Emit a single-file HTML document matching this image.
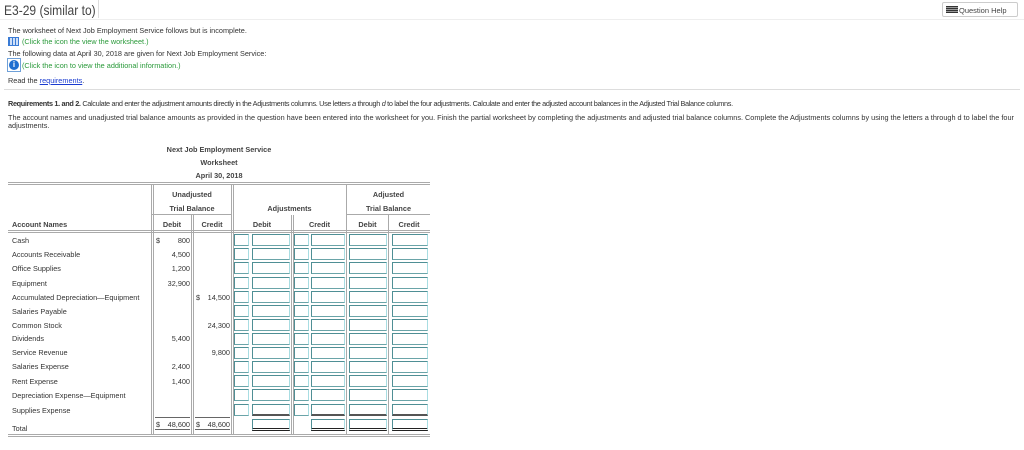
<!DOCTYPE html>
<html><head><meta charset="utf-8"><style>
*{margin:0;padding:0;box-sizing:border-box}
body{width:1024px;height:450px;background:#fff;font-family:"Liberation Sans",Arial,sans-serif;color:#333;position:relative;overflow:hidden;font-size:7.3px}
.a{position:absolute;white-space:nowrap}
.g{color:#2a9a3a}
.vl{position:absolute;width:1px;background:#aaa}
.hl{position:absolute;height:1px;background:#aaa}
.in{position:absolute;height:12px;border:1px solid #4f8f95;border-right-color:#a8dde2;border-bottom-color:#6aa4a8;background:#fff}
.r{text-align:right}
.c{text-align:center}
.b{font-weight:bold;color:#444}
</style></head><body>
<div class="a" style="left:4px;top:2px;font-size:14px;color:#444;transform:scaleX(0.86);transform-origin:0 0">E3-29 (similar to)</div>
<div class="vl" style="left:98px;top:0;height:18px;background:#ddd"></div>
<div class="hl" style="left:0;top:19px;width:1024px;background:#eee"></div>
<div class="a" style="left:942px;top:2px;width:76px;height:15px;border:1px solid #ccc;border-radius:2px;font-size:7.5px;padding:3px 0 0 16px;color:#444">Question Help</div>
<div class="a" style="left:946px;top:6px;width:12px;height:7px;background:repeating-linear-gradient(180deg,#333 0 1.5px,#fff 1.5px 2px)"></div>

<div class="a" style="left:8px;top:26px">The worksheet of Next Job Employment Service follows but is incomplete.</div>
<div class="a" style="left:8px;top:37px;width:11px;height:9px;border:1px solid #3a7bd5;background:repeating-linear-gradient(90deg,#3a7bd5 0 1px,#cfe0f8 1px 3px)"></div>
<div class="a g" style="left:22px;top:37px">(Click the icon the view the worksheet.)</div>
<div class="a" style="left:8px;top:49px">The following data at April 30, 2018 are given for Next Job Employment Service:</div>
<div class="a" style="left:7px;top:58px;width:14px;height:14px;border:1px solid #6ea0d8"></div>
<div class="a" style="left:9px;top:60px;width:10px;height:10px;border-radius:50%;background:#1f6fd0;color:#fff;font-weight:bold;font-size:8px;text-align:center;line-height:10px">i</div>
<div class="a g" style="left:22px;top:61px">(Click the icon to view the additional information.)</div>
<div class="a" style="left:8px;top:76px">Read the <span style="color:#1a3bd0;text-decoration:underline">requirements</span>.</div>
<div class="hl" style="left:4px;top:89px;width:1016px;background:#ddd"></div>
<div class="a" style="left:8px;top:99px;letter-spacing:-0.33px"><b>Requirements 1. and 2.</b> Calculate and enter the adjustment amounts directly in the Adjustments columns. Use letters <i>a</i> through <i>d</i> to label the four adjustments. Calculate and enter the adjusted account balances in the Adjusted Trial Balance columns.</div>
<div class="a" style="left:8px;top:113px">The account names and unadjusted trial balance amounts as provided in the question have been entered into the worksheet for you. Finish the partial worksheet by completing the adjustments and adjusted trial balance columns. Complete the Adjustments columns by using the letters a through d to label the four</div>
<div class="a" style="left:8px;top:121px">adjustments.</div>

<div class="a c b" style="left:8px;width:422px;top:145px">Next Job Employment Service</div>
<div class="a c b" style="left:8px;width:422px;top:158px">Worksheet</div>
<div class="a c b" style="left:8px;width:422px;top:171px">April 30, 2018</div>

<div class="hl" style="left:8px;top:182px;width:422px"></div>
<div class="hl" style="left:8px;top:184px;width:422px"></div>
<div class="hl" style="left:152px;top:214px;width:80px"></div>
<div class="hl" style="left:347px;top:214px;width:83px"></div>
<div class="hl" style="left:8px;top:230px;width:422px"></div>
<div class="hl" style="left:8px;top:232px;width:422px"></div>
<div class="hl" style="left:8px;top:434px;width:422px"></div>
<div class="hl" style="left:8px;top:436px;width:422px"></div>

<div class="vl" style="left:151px;top:185px;height:250px"></div>
<div class="vl" style="left:153px;top:185px;height:250px"></div>
<div class="vl" style="left:191px;top:215px;height:220px"></div>
<div class="vl" style="left:193px;top:215px;height:220px"></div>
<div class="vl" style="left:231px;top:185px;height:250px"></div>
<div class="vl" style="left:233px;top:185px;height:250px"></div>
<div class="vl" style="left:291px;top:215px;height:220px"></div>
<div class="vl" style="left:293px;top:215px;height:220px"></div>
<div class="vl" style="left:346px;top:185px;height:250px"></div>
<div class="vl" style="left:388px;top:215px;height:220px"></div>

<div class="a c b" style="left:152px;width:80px;top:190px">Unadjusted</div>
<div class="a c b" style="left:152px;width:80px;top:204px">Trial Balance</div>
<div class="a c b" style="left:232px;width:115px;top:204px">Adjustments</div>
<div class="a c b" style="left:347px;width:83px;top:190px">Adjusted</div>
<div class="a c b" style="left:347px;width:83px;top:204px">Trial Balance</div>
<div class="a b" style="left:12px;top:220px">Account Names</div>
<div class="a c b" style="left:152px;width:40px;top:220px">Debit</div>
<div class="a c b" style="left:192px;width:40px;top:220px">Credit</div>
<div class="a c b" style="left:232px;width:60px;top:220px">Debit</div>
<div class="a c b" style="left:292px;width:55px;top:220px">Credit</div>
<div class="a c b" style="left:347px;width:41px;top:220px">Debit</div>
<div class="a c b" style="left:388px;width:42px;top:220px">Credit</div>

<div class="a" style="left:12px;top:236px">Cash</div><div class="a" style="left:156px;top:236px">$</div><div class="a r" style="left:160px;width:30px;top:236px">800</div>
<div class="a" style="left:12px;top:250px">Accounts Receivable</div><div class="a r" style="left:160px;width:30px;top:250px">4,500</div>
<div class="a" style="left:12px;top:264px">Office Supplies</div><div class="a r" style="left:160px;width:30px;top:264px">1,200</div>
<div class="a" style="left:12px;top:279px">Equipment</div><div class="a r" style="left:160px;width:30px;top:279px">32,900</div>
<div class="a" style="left:12px;top:293px">Accumulated Depreciation—Equipment</div><div class="a" style="left:196px;top:293px">$</div><div class="a r" style="left:200px;width:30px;top:293px">14,500</div>
<div class="a" style="left:12px;top:307px">Salaries Payable</div>
<div class="a" style="left:12px;top:321px">Common Stock</div><div class="a r" style="left:200px;width:30px;top:321px">24,300</div>
<div class="a" style="left:12px;top:334px">Dividends</div><div class="a r" style="left:160px;width:30px;top:334px">5,400</div>
<div class="a" style="left:12px;top:348px">Service Revenue</div><div class="a r" style="left:200px;width:30px;top:348px">9,800</div>
<div class="a" style="left:12px;top:362px">Salaries Expense</div><div class="a r" style="left:160px;width:30px;top:362px">2,400</div>
<div class="a" style="left:12px;top:377px">Rent Expense</div><div class="a r" style="left:160px;width:30px;top:377px">1,400</div>
<div class="a" style="left:12px;top:391px">Depreciation Expense—Equipment</div>
<div class="a" style="left:12px;top:406px">Supplies Expense</div>
<div class="hl" style="left:155px;top:417px;width:35px;background:#666"></div>
<div class="hl" style="left:195px;top:417px;width:35px;background:#666"></div>
<div class="a" style="left:12px;top:424px">Total</div>
<div class="a" style="left:156px;top:420px">$</div><div class="a r" style="left:160px;width:30px;top:420px">48,600</div>
<div class="a" style="left:196px;top:420px">$</div><div class="a r" style="left:200px;width:30px;top:420px">48,600</div>
<div class="hl" style="left:155px;top:429px;width:35px;background:#666"></div>
<div class="hl" style="left:195px;top:429px;width:35px;background:#666"></div>

<div style="position:absolute;left:0;top:0">
<div class="in" style="left:234px;top:234px;width:15px"></div><div class="in" style="left:252px;top:234px;width:38px"></div><div class="in" style="left:294px;top:234px;width:15px"></div><div class="in" style="left:311px;top:234px;width:34px"></div><div class="in" style="left:349px;top:234px;width:38px"></div><div class="in" style="left:392px;top:234px;width:36px"></div>
<div class="in" style="left:234px;top:248px;width:15px"></div><div class="in" style="left:252px;top:248px;width:38px"></div><div class="in" style="left:294px;top:248px;width:15px"></div><div class="in" style="left:311px;top:248px;width:34px"></div><div class="in" style="left:349px;top:248px;width:38px"></div><div class="in" style="left:392px;top:248px;width:36px"></div>
<div class="in" style="left:234px;top:262px;width:15px"></div><div class="in" style="left:252px;top:262px;width:38px"></div><div class="in" style="left:294px;top:262px;width:15px"></div><div class="in" style="left:311px;top:262px;width:34px"></div><div class="in" style="left:349px;top:262px;width:38px"></div><div class="in" style="left:392px;top:262px;width:36px"></div>
<div class="in" style="left:234px;top:277px;width:15px"></div><div class="in" style="left:252px;top:277px;width:38px"></div><div class="in" style="left:294px;top:277px;width:15px"></div><div class="in" style="left:311px;top:277px;width:34px"></div><div class="in" style="left:349px;top:277px;width:38px"></div><div class="in" style="left:392px;top:277px;width:36px"></div>
<div class="in" style="left:234px;top:291px;width:15px"></div><div class="in" style="left:252px;top:291px;width:38px"></div><div class="in" style="left:294px;top:291px;width:15px"></div><div class="in" style="left:311px;top:291px;width:34px"></div><div class="in" style="left:349px;top:291px;width:38px"></div><div class="in" style="left:392px;top:291px;width:36px"></div>
<div class="in" style="left:234px;top:305px;width:15px"></div><div class="in" style="left:252px;top:305px;width:38px"></div><div class="in" style="left:294px;top:305px;width:15px"></div><div class="in" style="left:311px;top:305px;width:34px"></div><div class="in" style="left:349px;top:305px;width:38px"></div><div class="in" style="left:392px;top:305px;width:36px"></div>
<div class="in" style="left:234px;top:319px;width:15px"></div><div class="in" style="left:252px;top:319px;width:38px"></div><div class="in" style="left:294px;top:319px;width:15px"></div><div class="in" style="left:311px;top:319px;width:34px"></div><div class="in" style="left:349px;top:319px;width:38px"></div><div class="in" style="left:392px;top:319px;width:36px"></div>
<div class="in" style="left:234px;top:333px;width:15px"></div><div class="in" style="left:252px;top:333px;width:38px"></div><div class="in" style="left:294px;top:333px;width:15px"></div><div class="in" style="left:311px;top:333px;width:34px"></div><div class="in" style="left:349px;top:333px;width:38px"></div><div class="in" style="left:392px;top:333px;width:36px"></div>
<div class="in" style="left:234px;top:347px;width:15px"></div><div class="in" style="left:252px;top:347px;width:38px"></div><div class="in" style="left:294px;top:347px;width:15px"></div><div class="in" style="left:311px;top:347px;width:34px"></div><div class="in" style="left:349px;top:347px;width:38px"></div><div class="in" style="left:392px;top:347px;width:36px"></div>
<div class="in" style="left:234px;top:361px;width:15px"></div><div class="in" style="left:252px;top:361px;width:38px"></div><div class="in" style="left:294px;top:361px;width:15px"></div><div class="in" style="left:311px;top:361px;width:34px"></div><div class="in" style="left:349px;top:361px;width:38px"></div><div class="in" style="left:392px;top:361px;width:36px"></div>
<div class="in" style="left:234px;top:375px;width:15px"></div><div class="in" style="left:252px;top:375px;width:38px"></div><div class="in" style="left:294px;top:375px;width:15px"></div><div class="in" style="left:311px;top:375px;width:34px"></div><div class="in" style="left:349px;top:375px;width:38px"></div><div class="in" style="left:392px;top:375px;width:36px"></div>
<div class="in" style="left:234px;top:389px;width:15px"></div><div class="in" style="left:252px;top:389px;width:38px"></div><div class="in" style="left:294px;top:389px;width:15px"></div><div class="in" style="left:311px;top:389px;width:34px"></div><div class="in" style="left:349px;top:389px;width:38px"></div><div class="in" style="left:392px;top:389px;width:36px"></div>
<div class="in" style="left:234px;top:404px;width:15px"></div><div class="in" style="left:252px;top:404px;width:38px;border-bottom:2px solid #555"></div><div class="in" style="left:294px;top:404px;width:15px"></div><div class="in" style="left:311px;top:404px;width:34px;border-bottom:2px solid #555"></div><div class="in" style="left:349px;top:404px;width:38px;border-bottom:2px solid #555"></div><div class="in" style="left:392px;top:404px;width:36px;border-bottom:2px solid #555"></div>
<div class="in" style="left:252px;top:419px;width:38px;border-bottom:3px double #222"></div><div class="in" style="left:311px;top:419px;width:34px;border-bottom:3px double #222"></div><div class="in" style="left:349px;top:419px;width:38px;border-bottom:3px double #222"></div><div class="in" style="left:392px;top:419px;width:36px;border-bottom:3px double #222"></div>
</div>
</body></html>
